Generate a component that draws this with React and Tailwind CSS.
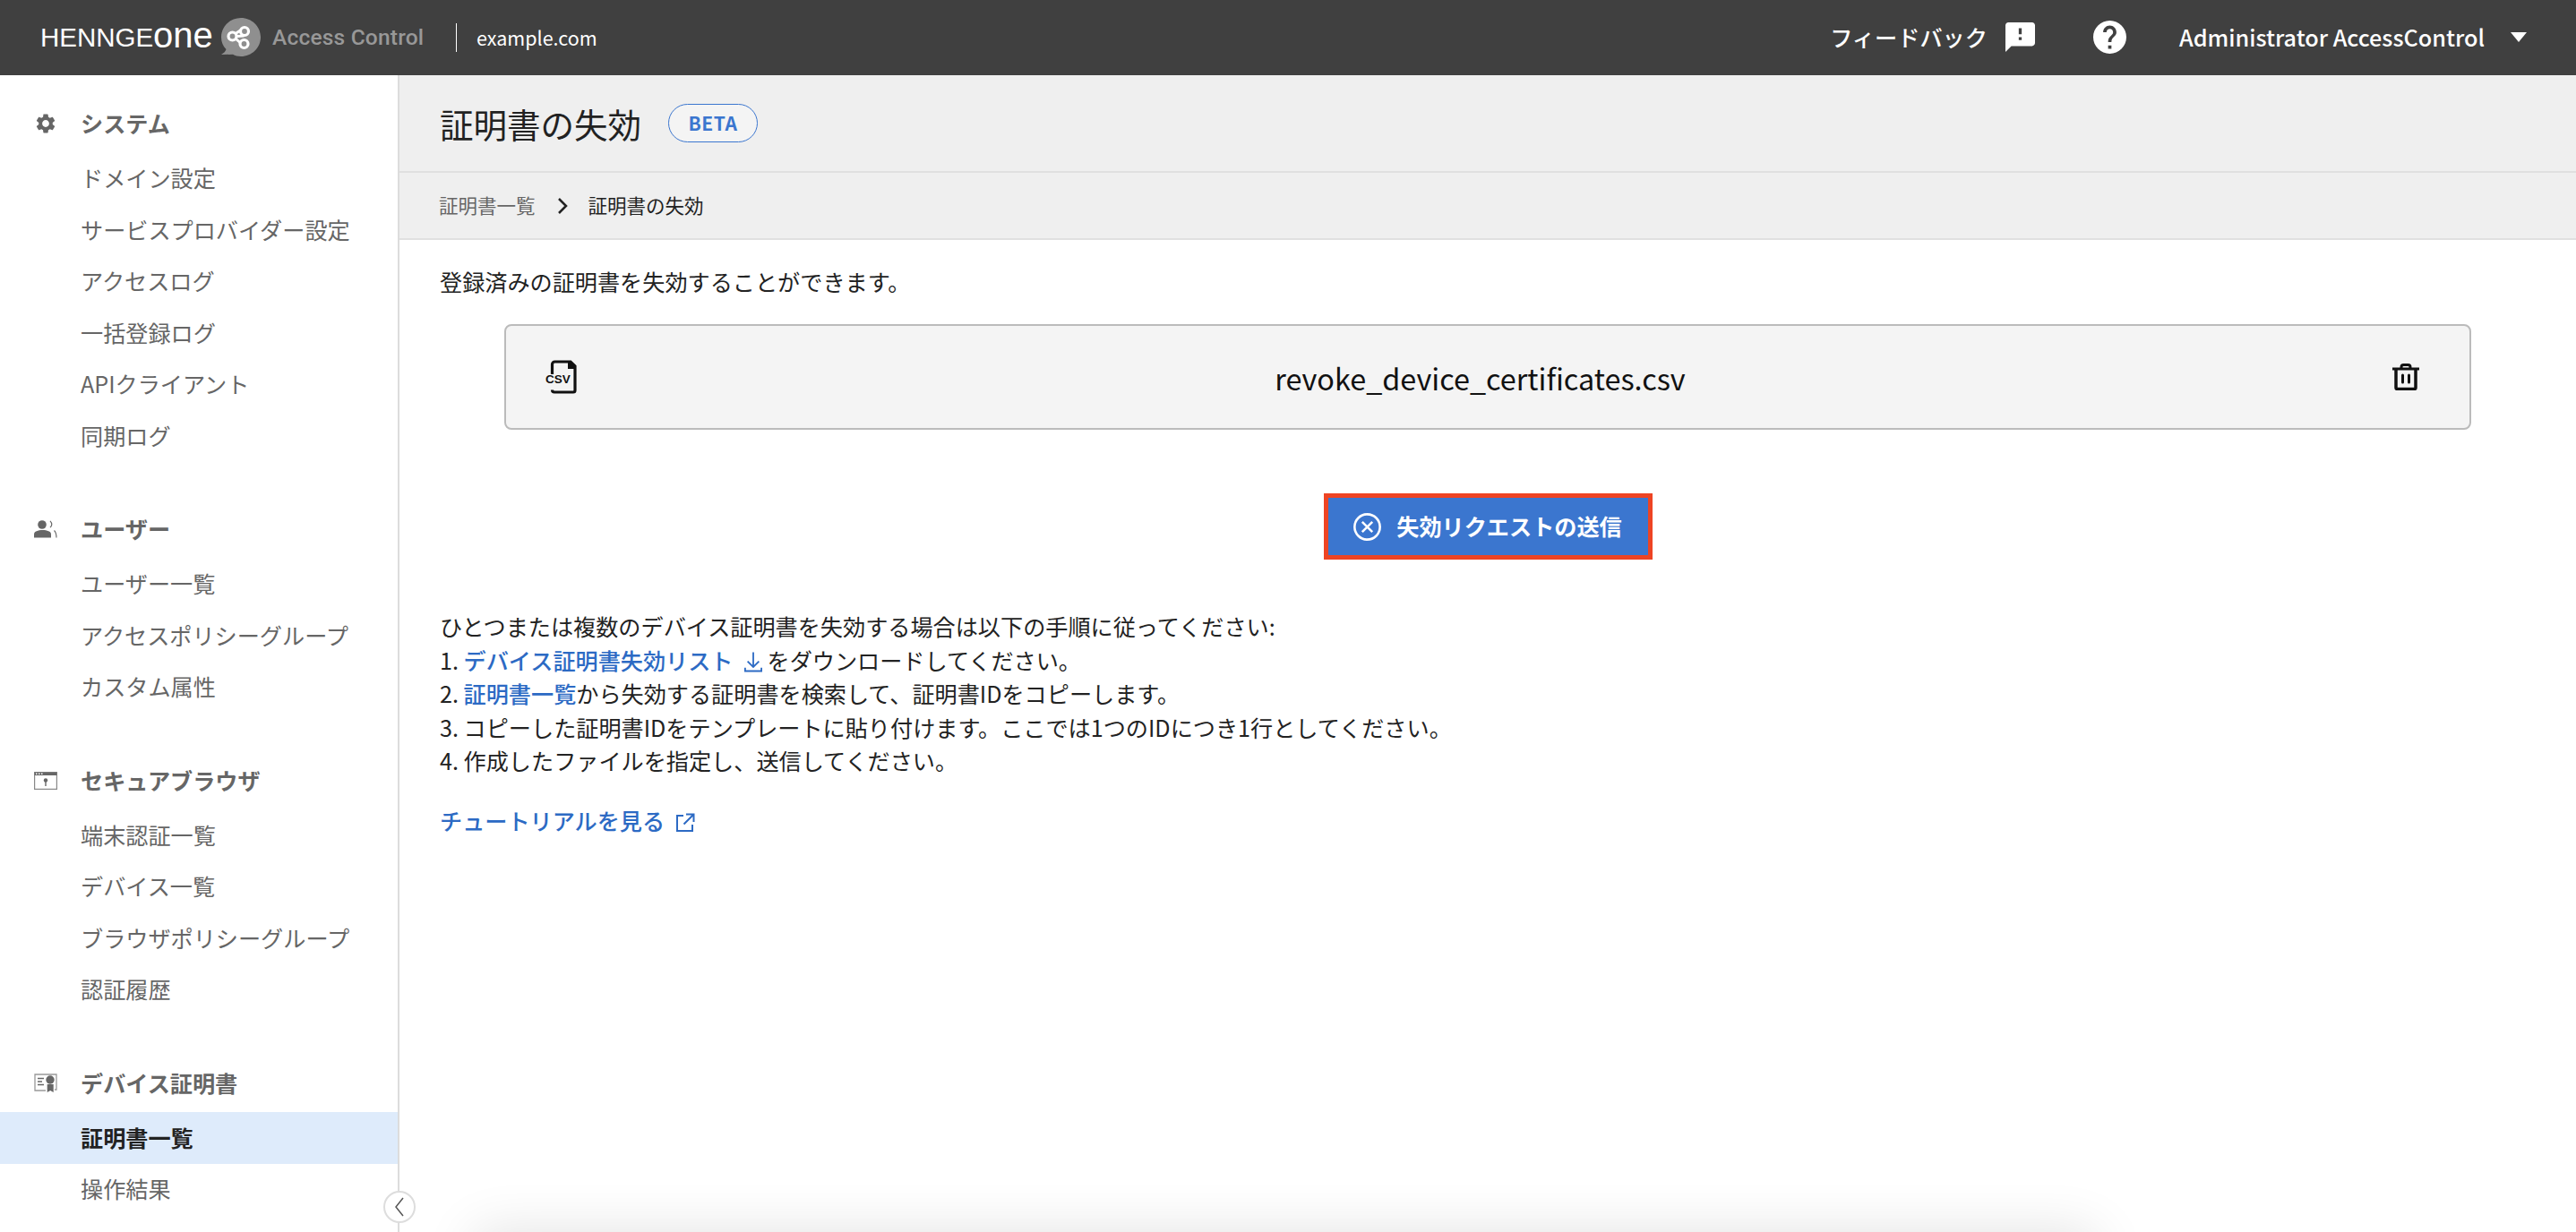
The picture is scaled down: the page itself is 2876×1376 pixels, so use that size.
import React from "react";

const jp = "font-['Noto_Sans_CJK_JP','Noto_Sans',sans-serif]";

const Gear = () => (
  <svg viewBox="0 0 24 24" className="w-[26px] h-[26px] fill-[#666]">
    <path d="M19.14 12.94c.04-.3.06-.61.06-.94 0-.32-.02-.64-.07-.94l2.03-1.58a.49.49 0 0 0 .12-.61l-1.92-3.32a.488.488 0 0 0-.59-.22l-2.39.96c-.5-.38-1.03-.7-1.62-.94l-.36-2.54a.484.484 0 0 0-.48-.41h-3.84c-.24 0-.43.17-.47.41l-.36 2.54c-.59.24-1.13.57-1.62.94l-2.39-.96c-.22-.08-.47 0-.59.22L2.74 8.87c-.12.21-.08.47.12.61l2.03 1.58c-.05.3-.09.63-.09.94s.02.64.07.94l-2.03 1.58a.49.49 0 0 0-.12.61l1.92 3.32c.12.22.37.29.59.22l2.39-.96c.5.38 1.03.7 1.62.94l.36 2.54c.05.24.24.41.48.41h3.84c.24 0 .44-.17.47-.41l.36-2.54c.59-.24 1.13-.56 1.62-.94l2.39.96c.22.08.47 0 .59-.22l1.92-3.32c.12-.22.07-.47-.12-.61l-2.01-1.58zM12 15.6c-1.98 0-3.6-1.62-3.6-3.6s1.62-3.6 3.6-3.6 3.6 1.62 3.6 3.6-1.62 3.6-3.6 3.6z" />
  </svg>
);
const Users = () => (
  <svg viewBox="0 0 26 20" className="w-[26px] h-[20px]">
    <circle cx="9" cy="5" r="4.800" fill="#666" />
    <path d="M0 19.500v-4c0-3 4.500-4.500 9.500-4.500s9.500 1.500 9.500 4.500v4z" fill="#666" />
    <path d="M18 .8Q21.500 4.500 18 8.200M22.500 11.500Q25 14 25 19.500" fill="none" stroke="#666" strokeWidth="1.100" />
  </svg>
);
const Browser = () => (
  <svg viewBox="0 0 26 20" className="w-[26px] h-[20px]">
    <rect x=".6" y=".6" width="24.800" height="18.800" fill="none" stroke="#888" strokeWidth="1.200" />
    <rect x=".6" y=".6" width="24.800" height="3.400" fill="#666" />
    <rect x="2" y="1.500" width="1.500" height="1.500" fill="#fff" />
    <rect x="5" y="1.500" width="1.500" height="1.500" fill="#fff" />
    <rect x="8" y="1.500" width="1.500" height="1.500" fill="#fff" />
    <circle cx="13" cy="9.500" r="2.200" fill="#666" />
    <rect x="12.300" y="10" width="1.400" height="6" fill="#666" />
  </svg>
);
const Cert = () => (
  <svg viewBox="0 0 26 21" className="w-[26px] h-[21px]">
    <path d="M13 19H1V1h24v17h-2" fill="none" stroke="#999" strokeWidth="1.300" />
    <path d="M4 5.500h7M4 9h5M4 12.500h7" stroke="#666" strokeWidth="1.300" />
    <circle cx="18" cy="7" r="4.700" fill="#666" />
    <path d="M14.700 12h7v9l-3.500-2-3.500 2z" fill="#666" />
  </svg>
);

const groups = [
  { title: "システム", icon: <Gear />, items: ["ドメイン設定", "サービスプロバイダー設定", "アクセスログ", "一括登録ログ", "APIクライアント", "同期ログ"] },
  { title: "ユーザー", icon: <Users />, items: ["ユーザー一覧", "アクセスポリシーグループ", "カスタム属性"] },
  { title: "セキュアブラウザ", icon: <Browser />, items: ["端末認証一覧", "デバイス一覧", "ブラウザポリシーグループ", "認証履歴"] },
  { title: "デバイス証明書", icon: <Cert />, items: ["証明書一覧", "操作結果"] },
];

function Header() {
  return (
    <header className="h-[84px] shrink-0 bg-[#404040] flex items-center pl-[45px] pr-[55px] text-white">
      <div className="flex items-center">
        <span className="font-['Liberation_Sans',sans-serif] text-[29.500px] leading-none w-[126px]">HENNGE</span>
        <span className="font-['Liberation_Sans',sans-serif] text-[40px] leading-none w-[76px] -mt-[6px]">one</span>
        <svg viewBox="0 0 44 44" className="w-[44px] h-[44px]">
          <path d="M22 0c12 0 22 9.500 22 21.500S34 43 22 43c-3.500 0-6.500-.8-9-2.200L0 41c3-1.800 5-3.800 5.500-6C2 31.500 0 27 0 21.500 0 9.500 10 0 22 0z" fill="#8f8f8f" />
          <path d="M16 17.500L22 13.500M16.500 23.500L21 27.500M25.500 20L18 20.500" fill="none" stroke="#fff" strokeWidth="3" />
          <circle cx="12.500" cy="20.500" r="4.500" fill="none" stroke="#fff" strokeWidth="3.200" />
          <circle cx="26" cy="15" r="4.500" fill="none" stroke="#fff" strokeWidth="3.200" />
          <circle cx="25.500" cy="29" r="4.500" fill="none" stroke="#fff" strokeWidth="3.200" />
        </svg>
        <span className="ml-[13px] w-[205px] font-['Roboto',sans-serif] font-medium text-[24.500px] text-[#989898] tracking-[0.2px]">Access Control</span>
      </div>
      <div className="w-[1px] h-[32px] bg-white" />
      <span className={`ml-[22px] text-[21.500px] ${jp}`}>example.com</span>
      <div className={`ml-auto flex items-center text-[25.200px] font-medium ${jp}`}>
        <span>フィードバック</span>
        <svg viewBox="2 2 20 20" className="ml-[20px] w-[33px] h-[33px] fill-white">
          <path d="M20 2H4c-1.100 0-1.990.9-1.990 2L2 22l4-4h14c1.100 0 2-.9 2-2V4c0-1.100-.9-2-2-2zm-7 12h-2v-2h2v2zm0-4h-2V6h2v4z" />
        </svg>
        <svg viewBox="2 2 20 20" className="ml-[65px] w-[37px] h-[37px] fill-white">
          <path d="M12 2C6.480 2 2 6.480 2 12s4.480 10 10 10 10-4.480 10-10S17.520 2 12 2zm1 17h-2v-2h2v2zm2.070-7.750l-.9.920C13.450 12.900 13 13.500 13 15h-2v-.5c0-1.100.450-2.100 1.170-2.830l1.240-1.260c.370-.360.590-.860.590-1.410 0-1.100-.9-2-2-2s-2 .9-2 2H8c0-2.210 1.790-4 4-4s4 1.790 4 4c0 .880-.360 1.680-.930 2.250z" />
        </svg>
        <span className="ml-[59px]">Administrator AccessControl</span>
        <span className="ml-[29px] w-0 h-0 border-x-[9px] border-x-transparent border-t-[11px] border-t-white" />
      </div>
    </header>
  );
}

function Sidebar() {
  return (
    <aside className={`relative w-[446px] shrink-0 border-r-2 border-[#dcdcdc] bg-white pt-[25px] ${jp}`}>
      {groups.map((g) => (
        <div key={g.title} className="mb-[46.500px]">
          <div className="h-[58px] flex items-center pl-[38px] mb-[3.500px] text-[25.150px] font-bold text-[#666]">
            <span className="w-[52px] flex items-center">{g.icon}</span>
            {g.title}
          </div>
          {g.items.map((it) => (
            <div
              key={it}
              className={`h-[57.500px] flex items-center pl-[90px] text-[25.150px] ${it === "証明書一覧" ? "bg-[#deebfb] font-bold text-[#222]" : "text-[#666]"}`}
            >
              {it}
            </div>
          ))}
        </div>
      ))}
    </aside>
  );
}

function Main() {
  const link = "text-[#2c6ac4] font-medium";
  return (
    <main className={`flex-1 min-w-0 flex flex-col text-[#222] ${jp}`}>
      <div className="h-[109px] bg-[#efefef] border-b-2 border-[#e0e0e0] flex items-center pl-[45px]">
        <h1 className="text-[37.500px] font-normal leading-none">証明書の失効</h1>
        <span className="ml-[30px] h-[43px] w-[100px] rounded-full border-[1.500px] border-[#3b76cf] bg-white/30 text-[#3b76cf] font-bold text-[21px] flex items-center justify-center tracking-[0.5px]">BETA</span>
      </div>
      <div className="h-[75px] bg-[#efefef] border-b-2 border-[#e0e0e0] flex items-center pl-[44px] text-[21.500px]">
        <span className="text-[#666]">証明書一覧</span>
        <svg viewBox="0 0 12 20" className="ml-[24px] mr-[23px] w-[12px] h-[20px]">
          <path d="M2 2l8 8-8 8" fill="none" stroke="#222" strokeWidth="2.500" />
        </svg>
        <span>証明書の失効</span>
      </div>
      <div className="px-[45px] pt-[28px]">
        <p className="text-[25.150px] leading-[37px]">登録済みの証明書を失効することができます。</p>
        <div className="mx-[72px] mt-[29px] h-[118px] rounded-[8px] border-2 border-[#bbbbbb] bg-[#f4f4f4] flex items-center justify-between pl-[44px] pr-[56px]">
          <svg viewBox="0 0 35 38" className="w-[35px] h-[38px]">
            <path d="M7.500 16V5a3 3 0 0 1 3-3H28l5 5v27a2 2 0 0 1-2 2H10a2.500 2.500 0 0 1-2.500-2.500" fill="none" stroke="#111" strokeWidth="3.200" />
            <path d="M25 2h3l5 5v3h-8z" fill="#111" />
            <text x="0" y="26" fontFamily="Liberation Sans" fontWeight="700" fontSize="13.500" fill="#111" stroke="#f4f4f4" strokeWidth="2.500" paintOrder="stroke">CSV</text>
          </svg>
          <span className="text-[32.400px] text-[#111] mr-[10px] mt-[2px]">revoke_device_certificates.csv</span>
          <svg viewBox="0 0 30 30" className="w-[30px] h-[30px]">
            <path d="M0 6h30" stroke="#111" strokeWidth="3" />
            <path d="M10 6V4a2.500 2.500 0 0 1 2.500-2.500h5A2.500 2.500 0 0 1 20 4v2" fill="none" stroke="#111" strokeWidth="3" />
            <path d="M4 6v21a1.500 1.500 0 0 0 1.500 1.500h19A1.500 1.500 0 0 0 26 27V6" fill="none" stroke="#111" strokeWidth="3.500" />
            <path d="M11.500 13v8M18.500 13v8" stroke="#111" strokeWidth="3" strokeLinecap="round" />
          </svg>
        </div>
        <div className="flex justify-center mt-[71px]">
          <button className="w-[367px] h-[74px] bg-[#3b76cf] border-[5px] border-[#ee4423] text-white text-[25.150px] font-bold flex items-center justify-center">
            <svg viewBox="0 0 30 30" className="w-[31px] h-[31px] mr-[17px]">
              <circle cx="15" cy="15" r="13.700" fill="none" stroke="#fff" strokeWidth="2.500" />
              <path d="M9.500 9.500l11 11M20.500 9.500l-11 11" stroke="#fff" strokeWidth="2.500" />
            </svg>
            失効リクエストの送信
          </button>
        </div>
        <div className="mt-[56px] text-[25.150px] leading-[37.500px]">
          <p>ひとつまたは複数のデバイス証明書を失効する場合は以下の手順に従ってください:</p>
          <p>
            1. <span className={link}>デバイス証明書失効リスト</span>
            <svg viewBox="0 0 22 26" className="inline-block ml-[12px] mr-[6px] w-[20px] h-[25px] align-[-4px]">
              <path d="M11 1v17M4 12l7 7 7-7M1 20v4h20v-4" fill="none" stroke="#2c6ac4" strokeWidth="2" />
            </svg>
            をダウンロードしてください。
          </p>
          <p>
            2. <span className={link}>証明書一覧</span>から失効する証明書を検索して、証明書IDをコピーします。
          </p>
          <p>3. コピーした証明書IDをテンプレートに貼り付けます。ここでは1つのIDにつき1行としてください。</p>
          <p>4. 作成したファイルを指定し、送信してください。</p>
        </div>
        <p className={`mt-[29px] text-[25.150px] leading-[37.500px] ${link}`}>
          チュートリアルを見る
          <svg viewBox="0 0 22 22" className="inline-block ml-[12px] w-[22px] h-[22px] align-[-3px]">
            <path d="M9 3H2v17h17v-7M12 1.500h8.500V10M20 2L9.500 12.500" fill="none" stroke="#2c6ac4" strokeWidth="2" />
          </svg>
        </p>
      </div>
    </main>
  );
}

export default function App() {
  return (
    <div className="relative w-[2876px] h-[1376px] overflow-hidden bg-white flex flex-col">
      <Header />
      <div className="flex-1 min-h-0 flex">
        <Sidebar />
        <Main />
      </div>
      <div className="absolute left-[530px] top-[1376px] w-[1810px] h-[60px] rounded-[8px] shadow-[0_0_60px_rgba(0,0,0,0.12)] bg-white" />
      <button className="absolute left-[428px] top-[1330px] w-[36px] h-[36px] rounded-full border-2 border-[#dddddd] bg-white flex items-center justify-center">
        <svg viewBox="0 0 12 22" className="w-[12px] h-[22px]">
          <path d="M10 1L2 11l8 10" fill="none" stroke="#555" strokeWidth="1.500" />
        </svg>
      </button>
    </div>
  );
}
